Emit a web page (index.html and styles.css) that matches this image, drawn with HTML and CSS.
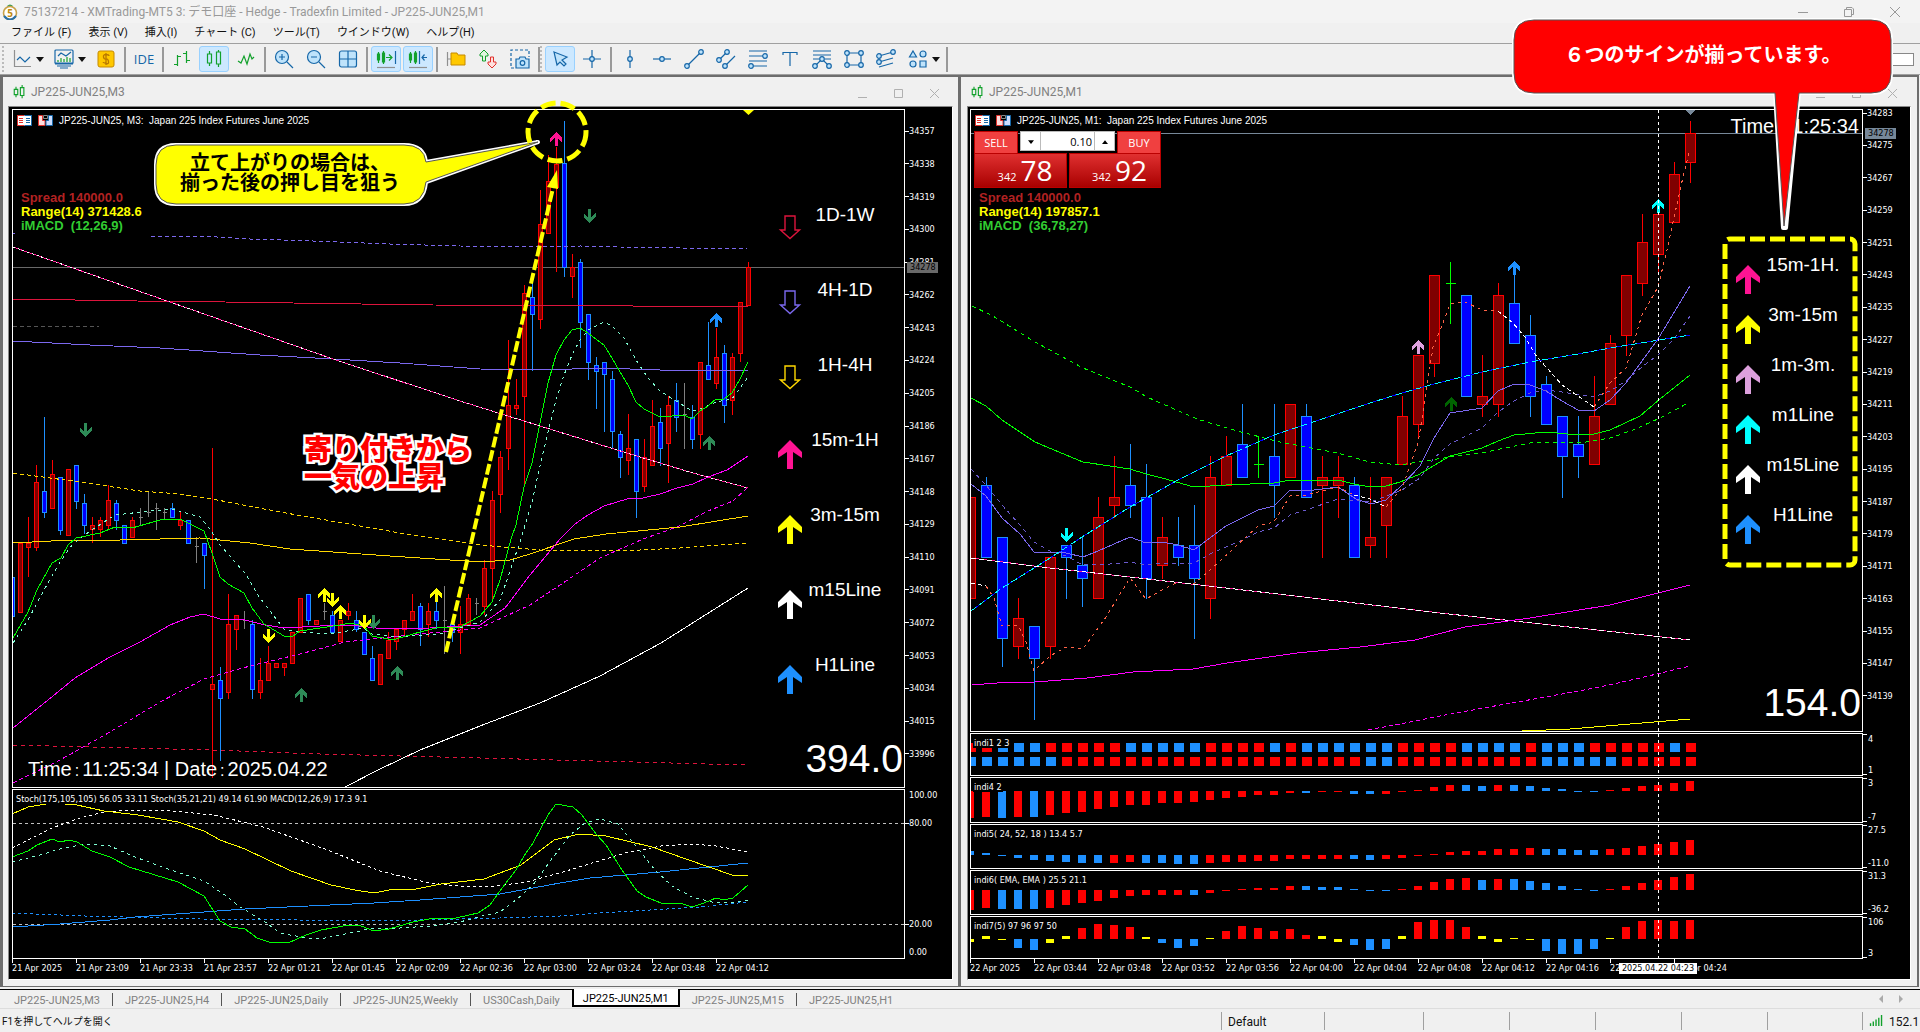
FILE: index.html
```
<!DOCTYPE html>
<html lang="ja">
<head>
<meta charset="utf-8">
<title>75137214 - XMTrading-MT5 3: デモ口座 - Hedge - Tradexfin Limited - JP225-JUN25,M1</title>
<link rel="stylesheet" href="styles.css">
</head>
<body>
<svg class="defs" width="0" height="0" aria-hidden="true">
  <symbol id="arrow" viewBox="0 0 24 29"><path d="M12 0 24 12V18L15 12V29H9V12L0 18V12Z" fill="currentColor"/></symbol>
  <symbol id="hollow" viewBox="0 0 22 25"><path d="M6 1H16V15H20.500L11 23.500 1.500 15H6Z" fill="none" stroke="currentColor" stroke-width="1.400"/></symbol>
  <symbol id="candles" viewBox="0 0 14 16"><path d="M3 2V5M3 11V14M10 0V3M10 12V15M1 5H5V11H1ZM8 3H12V12H8Z" fill="none" stroke="currentColor" stroke-width="1.300"/></symbol>
  <symbol id="caret" viewBox="0 0 8 5"><path d="M0 0H8L4 5Z" fill="currentColor"/></symbol>
  <symbol id="depth" viewBox="0 0 15 11"><path d="M0 0H15V11H0Z" fill="#fff"/><path d="M0 .5H7.500M.5 0V11M0 10.500H7.500M2 3.500H6M2 5.500H6M2 7.500H6" stroke="#e0322c"/><path d="M7.500 .5H15M14.500 0V11M7.500 10.500H15M9 3.500H13M9 5.500H13M9 7.500H13" stroke="#1667a8"/></symbol>
  <symbol id="oneclick" viewBox="0 0 15 11"><path d="M.5 .5H4.500V5.500H7V10.500H.5Z" fill="#fdd" stroke="#e0322c"/><path d="M14.500 .5H10.500V5.500H8V10.500H14.500Z" fill="#cdf" stroke="#1667a8"/><path d="M5.500 .5H9.500V3.500H5.500Z" fill="#000" stroke="#888"/></symbol>
</svg>
<div class="app">
  <header class="titlebar">
    <svg class="logo" viewBox="0 0 16 16"><path d="M5 2Q8-1 11 2L10 4H6Z" fill="#3a9a50"/><circle cx="8" cy="9" r="6.500" fill="#fff" stroke="#c9a24a" stroke-width="1.600"/><path d="M2 12Q8 19 14 12" fill="none" stroke="#2a70a8" stroke-width="2"/><text x="8" y="13" text-anchor="middle" class="logo-text">5</text></svg>
    <h1>75137214 - XMTrading-MT5 3: デモ口座 - Hedge - Tradexfin Limited - JP225-JUN25,M1</h1>
    <div class="win-buttons">
      <button aria-label="最小化"><svg viewBox="0 0 12 12"><path d="M1 6.500H11"/></svg></button>
      <button aria-label="元に戻す"><svg viewBox="0 0 12 12"><path d="M1.500 3.500H8.500V10.500H1.500ZM3.500 3V1.500H9L10.500 3V8.500H9"/></svg></button>
      <button aria-label="閉じる"><svg viewBox="0 0 12 12"><path d="M1 1 11 11M11 1 1 11"/></svg></button>
    </div>
  </header>
  <nav class="menubar">
    <button>ファイル (F)</button><button>表示 (V)</button><button>挿入(I)</button><button>チャート (C)</button><button>ツール(T)</button><button>ウインドウ(W)</button><button>ヘルプ(H)</button>
  </nav>
  <div class="toolbar">
    <span class="grip"></span>
    <button class="tool combo" aria-label="新規チャート"><svg viewBox="0 0 22 22"><path class="g" d="M3.500 2V19M3 18.500H20"/><path class="b" d="M6 12 9 9 14 14 19 9"/></svg><svg class="caret"><use href="#caret"/></svg></button>
    <button class="tool combo" aria-label="定型チャート"><svg viewBox="0 0 22 22"><path class="b" d="M3 2H19Q20 2 20 3V15H2V3Q2 2 3 2ZM2 16H20M4 18H18M7 20H15M5 8 8 5 13 8 18 4"/><path class="gr" d="M5 14V12M8 14V10M11 14V11M14 14V9M17 14V10"/></svg><svg class="caret"><use href="#caret"/></svg></button>
    <button class="tool" aria-label="気配値"><svg viewBox="0 0 22 22"><rect x="3" y="3" width="16" height="16" rx="2" fill="#ffc800" stroke="#c58a00"/><path d="M14 8Q14 6.500 11 6.500T8.500 9 11 11 13.500 13.500 11 15.500 8 14M11 5V17" fill="none" stroke="#b87800" stroke-width="1.300"/></svg></button>
    <span class="sep"></span>
    <button class="tool ide">IDE</button>
    <span class="sep"></span>
    <button class="tool" aria-label="バーチャート"><svg viewBox="0 0 22 22"><path class="gr" d="M6.500 7V18M3 16.500H6.500M6.500 8.500H10M15.500 3V15M12 5.500H15.500M15.500 12.500H19"/></svg></button>
    <button class="tool active" aria-label="ローソク足"><svg viewBox="0 0 22 22"><path class="gr" d="M6.500 3V6M6.500 15V18M15.500 2V4M15.500 16V19M4.500 6H8.500V15H4.500ZM13.500 4H17.500V16H13.500Z"/></svg></button>
    <button class="tool" aria-label="ラインチャート"><svg viewBox="0 0 22 22"><path class="gr" d="M3 13 6 15 9 8 12 16 15 6 17 11 19 9"/></svg></button>
    <span class="sep"></span>
    <button class="tool" aria-label="拡大"><svg viewBox="0 0 22 22"><circle class="f" cx="9" cy="9" r="6.500"/><path class="b" d="M14 14 20 20M9 6V12M6 9H12"/></svg></button>
    <button class="tool" aria-label="縮小"><svg viewBox="0 0 22 22"><circle class="f" cx="9" cy="9" r="6.500"/><path class="b" d="M14 14 20 20M6 9H12"/></svg></button>
    <button class="tool" aria-label="整列"><svg viewBox="0 0 22 22"><rect class="f" x="2.500" y="3" width="17" height="16" rx="2"/><path class="b" d="M11 3V19M2.500 11H19.500"/></svg></button>
    <span class="sep"></span>
    <button class="tool active" aria-label="自動スクロール"><svg viewBox="0 0 22 22"><path class="gr" d="M3.500 4V15M8.500 3V16M2.500 6H4.500V12H2.500ZM7.500 5H9.500V14H7.500ZM11 9.500H17M14 6.500 17 9.500 14 12.500"/><path class="b" d="M20.500 3V16"/><path class="g" d="M2 19.500H20"/></svg></button>
    <button class="tool active" aria-label="チャートシフト"><svg viewBox="0 0 22 22"><path class="gr" d="M3.500 4V15M8.500 3V16M2.500 6H4.500V12H2.500ZM7.500 5H9.500V14H7.500Z"/><path class="b" d="M12.500 3V16M20 9.500H15M17.500 6.500 15 9.500 17.500 12.500"/><path class="g" d="M2 19.500H20"/></svg></button>
    <span class="sep"></span>
    <button class="tool" aria-label="データフォルダ"><svg viewBox="0 0 22 22"><path class="g" d="M2.500 4V18M2 11H6"/><path d="M6 5H12L13 7H20V17H6Z" fill="#ffc800" stroke="#c58a00"/></svg></button>
    <button class="tool" aria-label="売買"><svg viewBox="0 0 22 22"><path d="M7 2 11 6V8H8.500V13H5.500V8H3V6Z" fill="#dff5df" stroke="#12a12c"/><path d="M15 20 11 16V14H13.500V9H16.500V14H19V16Z" fill="#ffe0de" stroke="#e0322c"/></svg></button>
    <button class="tool" aria-label="スクリーンショット"><svg viewBox="0 0 22 22"><path class="b" stroke-dasharray="3 2" d="M5 20H2V2H20V9"/><path class="f" d="M7 11H10L11 9H16L17 11H20V20H7Z"/><circle class="b" cx="13.500" cy="15" r="2.300"/></svg></button>
    <span class="sep"></span>
    <span class="grip second"></span>
    <button class="tool active" aria-label="カーソル"><svg viewBox="0 0 22 22"><path class="f" d="M5 4 18 9 13 12 17 16 15 18 11 14 8 17Z"/></svg></button>
    <button class="tool" aria-label="十字カーソル"><svg viewBox="0 0 22 22"><path class="b" d="M11 2V20M2 11H20"/><circle class="f" cx="11" cy="11" r="2.300"/></svg></button>
    <span class="sep"></span>
    <button class="tool" aria-label="垂直線"><svg viewBox="0 0 22 22"><path class="b" d="M11 2V20"/><circle class="f" cx="11" cy="11" r="2.300"/></svg></button>
    <button class="tool" aria-label="水平線"><svg viewBox="0 0 22 22"><path class="b" d="M2 11H20"/><circle class="f" cx="11" cy="11" r="2.300"/></svg></button>
    <button class="tool" aria-label="トレンドライン"><svg viewBox="0 0 22 22"><path class="b" d="M4 18 18 4"/><circle class="f" cx="4" cy="18" r="2.300"/><circle class="f" cx="18" cy="4" r="2.300"/></svg></button>
    <button class="tool" aria-label="平行チャネル"><svg viewBox="0 0 22 22"><path class="b" d="M4 12 12 4M10 18 20 8"/><circle class="f" cx="4" cy="12" r="2.300"/><circle class="f" cx="12" cy="4" r="2.300"/><circle class="f" cx="10" cy="18" r="2.300"/></svg></button>
    <button class="tool" aria-label="フィボナッチ"><svg viewBox="0 0 22 22"><path class="b" d="M2 3H20M2 8H16M2 13H20M6 18H20"/><circle class="f" cx="18" cy="8" r="2.300"/><circle class="f" cx="4" cy="18" r="2.300"/></svg></button>
    <button class="tool" aria-label="テキスト"><svg viewBox="0 0 22 22"><path class="b" d="M4 7V4.500H18V7M11 4.500V18"/></svg></button>
    <button class="tool" aria-label="ピッチフォーク"><svg viewBox="0 0 22 22"><path class="b" d="M2 3H20M2 7H20M2 11H8M14 11H20M4 18 11 11 18 18"/><circle class="f" cx="11" cy="11" r="2.300"/><circle class="f" cx="4" cy="18" r="2.300"/><circle class="f" cx="18" cy="18" r="2.300"/></svg></button>
    <button class="tool" aria-label="長方形"><svg viewBox="0 0 22 22"><path class="b" d="M4 5H18V17H4Z"/><circle class="f" cx="4" cy="5" r="2.300"/><circle class="f" cx="18" cy="5" r="2.300"/><circle class="f" cx="4" cy="17" r="2.300"/><circle class="f" cx="18" cy="17" r="2.300"/></svg></button>
    <button class="tool" aria-label="波動"><svg viewBox="0 0 22 22"><path class="b" d="M4 8 18 4M4 14 18 10M4 19 18 15"/><circle class="f" cx="4" cy="8" r="2.300"/><circle class="f" cx="18" cy="4" r="2.300"/><circle class="f" cx="4" cy="14" r="2.300"/></svg></button>
    <button class="tool combo" aria-label="図形"><svg viewBox="0 0 22 22"><path class="f" d="M6 3 9.500 9H2.500ZM13 13H19V19H13Z"/><circle class="f" cx="16" cy="6" r="3"/><circle class="f" cx="6" cy="16" r="3"/></svg><svg class="caret"><use href="#caret"/></svg></button>
    <span class="sep"></span>
    <input class="search" type="text" aria-label="検索">
  </div>

  <main class="mdi">
    <section class="window left">
      <header class="window-head"><svg class="window-icon"><use href="#candles"/></svg><h2>JP225-JUN25,M3</h2>
        <div class="window-buttons"><button aria-label="最小化"><svg viewBox="0 0 12 12"><path d="M1 10.500H10"/></svg></button><button aria-label="最大化"><svg viewBox="0 0 12 12"><path d="M1.500 2.500H9.500V10.500H1.500Z"/></svg></button><button aria-label="閉じる"><svg viewBox="0 0 12 12"><path d="M1 2 10 11M10 2 1 11"/></svg></button></div>
      </header>
      <div class="chart chart-m3">
        <div class="pane main">
          <svg class="plot" id="m3" viewBox="13 110 891 677" preserveAspectRatio="none"></svg>
          <div class="symbol"><svg><use href="#depth"/></svg><svg><use href="#oneclick"/></svg><span>JP225-JUN25, M3:&nbsp; Japan 225 Index Futures June 2025</span></div>
          <div class="info"><p class="spread">Spread 140000.0</p><p class="range">Range(14) 371428.6</p><p class="imacd">iMACD&nbsp; (12,26,9)</p></div>
          <ul class="legend">
            <li class="crimson"><svg><use href="#hollow"/></svg><span>1D-1W</span></li>
            <li class="slate"><svg><use href="#hollow"/></svg><span>4H-1D</span></li>
            <li class="gold"><svg><use href="#hollow"/></svg><span>1H-4H</span></li>
            <li class="pink"><svg><use href="#arrow"/></svg><span>15m-1H</span></li>
            <li class="yellow"><svg><use href="#arrow"/></svg><span>3m-15m</span></li>
            <li class="white"><svg><use href="#arrow"/></svg><span>m15Line</span></li>
            <li class="dodger"><svg><use href="#arrow"/></svg><span>H1Line</span></li>
          </ul>
          <p class="clock">Time<span class="colon">:</span>11:25:34 | Date<span class="colon">:</span>2025.04.22</p>
          <p class="big">394.0</p>
          <p class="note">寄り付きから<br>一気の上昇</p>
        </div>
        <ol class="scale prices" data-from="34357" data-step="19" data-count="20"></ol>
        <div class="pane">
          <svg class="plot" id="stoch" viewBox="13 790 891 168" preserveAspectRatio="none"></svg>
          <p class="pane-label">Stoch(175,105,105) 56.05 33.11 Stoch(35,21,21) 49.14 61.90 MACD(12,26,9) 17.3 9.1</p>
        </div>
        <ol class="scale levels"><li>100.00</li><li class="at80">80.00</li><li class="at20">20.00</li><li>0.00</li></ol>
        <ol class="times"><li>21 Apr 2025</li><li>21 Apr 23:09</li><li>21 Apr 23:33</li><li>21 Apr 23:57</li><li>22 Apr 01:21</li><li>22 Apr 01:45</li><li>22 Apr 02:09</li><li>22 Apr 02:36</li><li>22 Apr 03:00</li><li>22 Apr 03:24</li><li>22 Apr 03:48</li><li>22 Apr 04:12</li></ol>
        <span class="price-tag">34278</span>
        <svg class="speech" viewBox="150 96 444 114"><path class="halo" d="M176 145H404Q424 145 426 162L538 142 426 182Q424 204 404 204H176Q156 204 156 184V165Q156 145 176 145Z"/><path class="bubble" d="M176 145H404Q424 145 426 162L538 142 426 182Q424 204 404 204H176Q156 204 156 184V165Q156 145 176 145Z"/><circle cx="557" cy="132" r="29" fill="none" stroke="#ff0" stroke-width="5" stroke-dasharray="15 5"/></svg>
        <p class="speech-text">立て上がりの場合は、<br>揃った後の押し目を狙う</p>
      </div>
    </section>

    <section class="window right">
      <header class="window-head"><svg class="window-icon"><use href="#candles"/></svg><h2>JP225-JUN25,M1</h2>
        <div class="window-buttons"><button aria-label="最小化"><svg viewBox="0 0 12 12"><path d="M1 10.500H10"/></svg></button><button aria-label="最大化"><svg viewBox="0 0 12 12"><path d="M1.500 2.500H9.500V10.500H1.500Z"/></svg></button><button aria-label="閉じる"><svg viewBox="0 0 12 12"><path d="M1 2 10 11M10 2 1 11"/></svg></button></div>
      </header>
      <div class="chart chart-m1">
        <div class="pane main">
          <svg class="plot" id="m1" viewBox="971 110 891 621" preserveAspectRatio="none"></svg>
          <div class="symbol"><svg><use href="#depth"/></svg><svg><use href="#oneclick"/></svg><span>JP225-JUN25, M1:&nbsp; Japan 225 Index Futures June 2025</span></div>
          <form class="trade">
            <button type="button" class="side">SELL</button>
            <div class="lots"><button type="button" aria-label="減らす"><svg viewBox="0 0 8 5"><path d="M0 0H8L4 5Z"/></svg></button><input type="text" value="0.10" aria-label="ロット"><button type="button" aria-label="増やす"><svg viewBox="0 0 8 5"><path d="M0 5H8L4 0Z"/></svg></button></div>
            <button type="button" class="side">BUY</button>
            <div class="quotes"><button type="button"><small>342</small>78</button><button type="button"><small>342</small>92</button></div>
          </form>
          <div class="info"><p class="spread">Spread 140000.0</p><p class="range">Range(14) 197857.1</p><p class="imacd">iMACD&nbsp; (36,78,27)</p></div>
          <p class="clock">Time<span class="colon">:</span>11:25:34</p>
          <svg class="dashbox"><rect x="3" y="3" width="130" height="326" rx="5"/></svg>
          <ul class="legend">
            <li class="pink"><svg><use href="#arrow"/></svg><span>15m-1H.</span></li>
            <li class="yellow"><svg><use href="#arrow"/></svg><span>3m-15m</span></li>
            <li class="plum"><svg><use href="#arrow"/></svg><span>1m-3m.</span></li>
            <li class="aqua"><svg><use href="#arrow"/></svg><span>m1Line</span></li>
            <li class="white"><svg><use href="#arrow"/></svg><span>m15Line</span></li>
            <li class="dodger"><svg><use href="#arrow"/></svg><span>H1Line</span></li>
          </ul>
          <p class="big">154.0</p>
        </div>
        <ol class="scale prices" data-from="34283" data-step="8" data-count="19"></ol>
        <div class="pane"><svg class="plot" id="indi1" viewBox="971 734 891 41" preserveAspectRatio="none"></svg><p class="pane-label">indi1 2 3</p></div>
        <ol class="scale ends"><li>4</li><li>1</li></ol>
        <div class="pane"><svg class="plot" id="indi4" viewBox="971 778 891 44" preserveAspectRatio="none"></svg><p class="pane-label">indi4 2</p></div>
        <ol class="scale ends"><li>3</li><li>-7</li></ol>
        <div class="pane"><svg class="plot" id="indi5" viewBox="971 825 891 43" preserveAspectRatio="none"></svg><p class="pane-label">indi5( 24, 52, 18 ) 13.4 5.7</p></div>
        <ol class="scale ends"><li>27.5</li><li>-11.0</li></ol>
        <div class="pane"><svg class="plot" id="indi6" viewBox="971 871 891 43" preserveAspectRatio="none"></svg><p class="pane-label">indi6( EMA, EMA ) 25.5 21.1</p></div>
        <ol class="scale ends"><li>31.3</li><li>-36.2</li></ol>
        <div class="pane"><svg class="plot" id="indi7" viewBox="971 917 891 41" preserveAspectRatio="none"></svg><p class="pane-label">indi7(5) 97 96 97 50</p></div>
        <ol class="scale ends"><li>106</li><li>3</li></ol>
        <ol class="times"><li>22 Apr 2025</li><li>22 Apr 03:44</li><li>22 Apr 03:48</li><li>22 Apr 03:52</li><li>22 Apr 03:56</li><li>22 Apr 04:00</li><li>22 Apr 04:04</li><li>22 Apr 04:08</li><li>22 Apr 04:12</li><li>22 Apr 04:16</li><li>22 Apr 04:20</li><li>22 Apr 04:24</li></ol>
        <span class="time-tag">2025.04.22 04:23</span>
        <span class="price-tag">34278</span>
      </div>
    </section>
  </main>

  <nav class="tabs">
    <a href="#">JP225-JUN25,M3</a><a href="#">JP225-JUN25,H4</a><a href="#">JP225-JUN25,Daily</a><a href="#">JP225-JUN25,Weekly</a><a href="#">US30Cash,Daily</a><a href="#" class="current">JP225-JUN25,M1</a><a href="#">JP225-JUN25,M15</a><a href="#">JP225-JUN25,H1</a>
    <svg class="tab-scroll" viewBox="0 0 24 8"><path d="M4 0V8L0 4ZM20 0V8L24 4Z"/></svg>
  </nav>
  <footer class="status">
    <span class="hint">F1を押してヘルプを開く</span><span class="profile">Default</span><span class="cell"></span><span class="cell"></span><span class="cell"></span><span class="cell"></span><span class="cell"></span><span class="cell"></span>
    <span class="net"><svg viewBox="0 0 15 12"><path d="M1 12V9M4 12V7M7 12V5M10 12V3M13 12V0"/></svg>152.1</span>
  </footer>

  <div class="alert">
    <svg viewBox="1512 18 382 214"><path class="halo" d="M1534 20H1871Q1891 20 1891 40V73Q1891 93 1871 93H1799L1786 228H1783L1775 93H1534Q1514 93 1514 73V40Q1514 20 1534 20Z"/><path class="bubble" d="M1534 20H1871Q1891 20 1891 40V73Q1891 93 1871 93H1799L1784 226 1775 93H1534Q1514 93 1514 73V40Q1514 20 1534 20Z"/></svg>
    <p>６つのサインが揃っています。</p>
  </div>
</div>
<script src="charts.js"></script>
</body>
</html>
```
FILE: styles.css
```
*{box-sizing:border-box}
body{margin:0;background:#f0f0f0;font:12px/16px Roboto,"Noto Sans CJK JP",sans-serif;color:#111}
h1,h2,p,ul,ol{margin:0;padding:0;list-style:none}
h1,h2{font-size:12px;font-weight:400}
button{border:0;padding:0;background:none;font:inherit;color:inherit}
a{color:inherit;text-decoration:none}
.defs{position:absolute}
.app{position:relative;display:flex;flex-direction:column;height:100vh;min-height:700px;overflow:hidden}

.titlebar{display:flex;align-items:center;gap:6px;height:23px;padding-left:2px;background:#f3f3f3;color:#999}
.titlebar h1{flex:1}
.logo{width:16px;height:16px}
.logo-text{font:700 10px "Open Sans",sans-serif;fill:#c08a10}
.win-buttons{display:flex;gap:34px;padding-right:19px}
.win-buttons button,.window-buttons button{width:12px;height:12px}
.win-buttons svg,.window-buttons svg{display:block;width:12px;height:12px;fill:none;stroke:#999}
.menubar{display:flex;gap:17px;height:20px;padding-left:11px;font-size:11px;line-height:20px}
.menubar button{white-space:nowrap}

.toolbar{display:flex;align-items:center;gap:2px;height:32px;padding-left:2px;border-top:1px solid #a0a0a0;border-bottom:1px solid #a0a0a0}
.grip{width:3px;height:26px;border-left:2px dotted #bbb}
.grip.second{margin-left:-3px}
.tool{display:flex;align-items:center;justify-content:center;flex:none;width:30px;height:26px;border:1px solid transparent;border-radius:3px}
.tool svg{width:22px;height:22px}
.tool.combo{width:40px;gap:3px;justify-content:flex-start;padding-left:3px}
.tool .caret{width:8px;height:5px;color:#111}
.tool.active{background:#cce8ff;border-color:#99d1ff}
.tool.ide{color:#1667a8;font:13px "Open Sans",sans-serif}
.sep{width:2px;height:25px;margin:0 1px;background:#999}
.b,.f,.g,.gr{fill:none;stroke:#1667a8;stroke-width:1.200}
.f{fill:#bfe3fb}
.g{stroke:#909090}
.gr{stroke:#12a12c}
.search{width:170px;height:13px;margin:0 6px 0 auto;border:1px solid #888;background:#fff}

.mdi{flex:1;min-height:0;display:grid;grid-template-columns:1fr 1fr;margin-bottom:2px}
.window{display:flex;flex-direction:column;min-width:0;border:solid #6d6d6d;border-width:2px 2px 1px 3px;padding:0 5px 6px}
.window.right{border-left-width:1px;padding:0 6px 6px;margin-right:1px}
.window-head{display:flex;align-items:center;height:29px;padding-left:5px;gap:5px;color:#808080}
.window.right .window-head{padding-left:4px}
.window-head h2{flex:1;line-height:26px}
.window-icon{width:13px;height:14px;color:#12a12c}
.window-buttons{display:flex;gap:24px;padding:2px 12px 0 0}
.window-buttons svg{stroke:#b0b0b0}
.chart{position:relative;flex:1;min-height:0;display:grid;grid-template-columns:minmax(0,1fr) 47px;row-gap:1px;background:#000;border:1px solid #888;border-right-color:#fff;border-bottom-color:#fff;padding:2px 0 0 3px;color:#fff;font:9px/10px "DejaVu Sans Condensed","Noto Sans",sans-serif}
.chart-m3{grid-template-rows:minmax(0,1fr) 170px 19px}
.chart-m1{grid-template-rows:minmax(0,1fr) 43px 46px 45px 45px 43px 19px;padding-left:2px}
.pane{position:relative;border:1px solid #fff;min-height:0;overflow:hidden}
.plot{display:block;width:100%;height:100%;shape-rendering:crispEdges;fill:none}
.pane-label{position:absolute;left:2px;top:4px;padding:0 1px;background:#000}
.symbol{position:absolute;left:4px;top:5px;display:flex;align-items:center;gap:6px;font:10px/11px "Liberation Sans",sans-serif}
.symbol svg{width:15px;height:11px}
.info{position:absolute;left:8px;top:81px;font:700 13px/14px "Liberation Sans",sans-serif}
.spread{color:#b22222}.range{color:#ff0}.imacd{color:#32cd32}
.clock{position:absolute;left:15px;bottom:5px;font:20px/23px "Liberation Sans",sans-serif;white-space:nowrap}
.colon{padding:0 3px;font-size:16px}
.chart-m1 .clock{left:auto;bottom:auto;right:3px;top:5px}
.chart-m1 .colon{padding:0 2px}
.big{position:absolute;right:1px;bottom:5px;font:39px/46px "Liberation Sans",sans-serif}
.legend{position:absolute;right:17px;top:93px;font:19px/24px "Liberation Sans",sans-serif}
.legend li{display:flex;height:75px}
.legend svg{width:24px;height:29px;margin-top:12px}
.legend span{width:84px;margin-left:1px;text-align:center;color:#fff}
.chart-m1 .legend{right:17px;top:143px}
.chart-m1 .legend li{height:50px}
.crimson{color:#dc143c}.slate{color:#7b68ee}.gold{color:#ffd700}.pink{color:#ff1493}.yellow{color:#ff0}.white{color:#fff}.dodger{color:#1e90ff}.plum{color:#dda0dd}.aqua{color:#0ff}
.legend .crimson svg,.legend .slate svg,.legend .gold svg{height:25px}
.note{position:absolute;left:291px;top:325px;font:900 28px/27px "Noto Sans CJK JP",sans-serif;color:#f00;-webkit-text-stroke:5px #fff;paint-order:stroke fill}
.scale{display:flex;flex-direction:column;justify-content:space-between;line-height:8px}
.scale li{display:flex;align-items:center;height:8px}
.prices li::before,.levels .at80::before,.levels .at20::before{content:"";width:4px;height:1px;background:#fff}
.chart-m3 .prices{padding:18px 0 30px}
.chart-m1 .prices{padding:0 0 32px}
.levels{display:grid;grid-template-rows:28px 101px 28px 8px;padding:2px 0 3px;position:relative}
.levels li:first-child,.levels li:last-child{padding-left:4px}
.ends{padding:2px 0 2px 5px;position:relative}
.ends::before{content:"";position:absolute;left:0;top:1px;bottom:1px;width:4px;border:solid #fff;border-width:1px 0}
.times{grid-column:1/-1;display:flex;margin-top:-1px}
.times li{flex:none;width:64px;height:4px;padding:4px 0 0;border-left:1px solid #fff;white-space:nowrap;text-indent:-1px}
.time-tag{position:absolute;left:651px;bottom:5px;width:78px;background:#fff;color:#000;text-align:center;line-height:11px}
.price-tag{position:absolute;right:14px;top:155px;width:31px;padding-left:3px;background:#696969;color:#000;line-height:11px}
.chart-m1 .price-tag{top:21px;background:#789}
.speech{position:absolute;left:141px;top:-11px;width:444px;height:114px}
.halo{fill:#fff;stroke:#fff;stroke-width:4;stroke-linejoin:round}
.bubble{fill:#ff0;stroke:#555;stroke-width:1}
.speech-text{position:absolute;left:147px;top:45px;width:268px;text-align:center;font:700 20px/20px "Noto Sans CJK JP",sans-serif;color:#000}
.dashbox{position:absolute;right:4px;top:126px;width:136px;height:332px;fill:none;stroke:#ff0;stroke-width:5;stroke-dasharray:15 5}

.trade{position:absolute;left:3px;top:21px;display:grid;grid-template-columns:44px 95px 44px;justify-content:space-between;width:187px;font-family:"Open Sans",sans-serif}
.side{height:22px;background:#f04040;border:1px solid #b00;border-bottom:0;font-size:11px;line-height:18px;color:#fff}
.lots{display:flex;height:20px;background:#fff;border:1px solid #bbb}
.lots button{width:19px}
.lots svg{width:6px;height:4px;fill:#000}
.lots input{flex:1;min-width:0;border:solid #bbb;border-width:0 1px;padding:0 2px;text-align:right;font:11px "Open Sans",sans-serif;background:#fff}
.quotes{grid-column:1/-1;display:flex;gap:2px}
.quotes button{flex:1;height:35px;padding-right:13px;background:linear-gradient(#e03030,#a80000);border:1px solid #b00;text-align:right;font-size:28px;line-height:32px;color:#fff}
.quotes small{font-size:11px;margin-right:4px}

.tabs{display:flex;align-items:center;height:19px;border-top:1px solid #000;color:#808080;padding:0 17px 0 2px;font-size:11px}
.tabs a{height:13px;padding:0 12px;border-right:1px solid #555;line-height:15px;white-space:nowrap}
.tabs a:nth-child(5){border:0}
.tabs .current{align-self:stretch;height:18px;margin-top:-1px;border:solid #000;border-width:0 2px 2px;background:#fff;color:#000;line-height:20px;padding:0 9px}
.tabs a:nth-child(8){border:0}
.tab-scroll{width:24px;height:8px;margin-left:auto;fill:#aaa}
.status{display:flex;align-items:center;height:24px;border-top:1px solid #ddd;white-space:nowrap;overflow:hidden}
.status span{height:18px;border-left:1px solid #a0a0a0;line-height:20px}
.status .hint{flex:1;border:0;padding-left:2px;font-size:10px}
.status .profile{width:103px;padding-left:6px}
.status .cell{width:86px}
.status .cell:nth-child(3){width:99px}
.status .cell:nth-child(8){width:95px}
.status .net{width:58px;padding-left:6px}
.net svg{width:15px;height:11px;margin-right:5px;stroke:#12a12c;stroke-width:1.500}

.alert{position:absolute;right:26px;top:18px;width:382px;height:214px}
.alert svg{display:block;width:100%;height:100%}
.alert .bubble{fill:#f00}
.alert p{position:absolute;left:0;right:0;top:21px;text-align:center;color:#fff;font:700 20px/30px "Noto Sans CJK JP",sans-serif}
```
FILE: charts.js
```
const NS = 'http://www.w3.org/2000/svg';
const RED = ['#f00', '#800000'], BLUE = ['#1e90ff', '#00f'];

function add(svg, name, attrs) {
  const el = document.createElementNS(NS, name);
  for (const key in attrs) el.setAttribute(key, attrs[key]);
  svg.append(el);
  return el;
}
function line(svg, color, points, dash) {
  add(svg, 'polyline', { points, stroke: color, 'stroke-dasharray': dash || 'none' });
}
// rows: direction, high, open/close top, open/close bottom, low
function candles(svg, rows, x, step, width, doji) {
  for (const row of rows.trim().split(/\s+/)) {
    const [kind, spec] = [row[0], row.slice(1).split(',').map(Number)];
    if (kind === 'd') {
      const [high, mid, low] = spec;
      add(svg, 'path', { d: `M${x + .5} ${high}V${low}M${x - width / 2 + .5} ${mid + .5}h${width}`, stroke: doji });
    } else {
      const [edge, fill] = kind === 'r' ? RED : BLUE;
      const [high, top, bottom, low] = spec;
      add(svg, 'path', { d: `M${x + .5} ${high}V${low}`, stroke: edge });
      add(svg, 'rect', { x: x - width / 2 + .5, y: top + .5, width, height: Math.max(3, bottom - top), stroke: edge, fill });
    }
    x += step;
  }
}
function arrows(svg, list) {
  for (const [x, y, color, down] of list)
    add(svg, 'path', { d: 'M0-7 6-1V3L1.500-1V7H-1.500V-1L-6 3V-1Z', fill: color, transform: `translate(${x} ${y})${down ? ' scale(1 -1)' : ''}` });
}

const m3 = document.getElementById('m3');
line(m3, '#696969', '13,267.5 904,267.5');
candles(m3, `b577,577,616,616 r543,543,612,612 r517,543,547,577 r465,482,547,551 b417,491,512,518 r460,474,508,508 b477,477,530,535
r469,469,535,535 b465,465,501,509 b494,503,525,534 r517,525,529,543 r517,520,529,537 r485,500,525,530 b500,503,520,530 b525,525,543,543
r517,520,537,537 d508,517,526 d491,512,517 d503,508,530 d508,512,520 b503,508,517,517 r512,520,525,530 b520,520,543,543 d537,546,563
b543,543,555,589 r448,684,689,778 b667,680,698,761 r594,624,692,699 r615,615,629,650 d611,620,629 b620,624,689,699 r658,680,692,699
r646,663,680,680 r663,663,667,667 r663,663,667,676 r632,632,663,663 r598,598,632,632 b594,594,620,625 r620,620,624,624 d603,611,620
b611,615,632,632 r620,620,641,641 r603,611,615,620 b611,620,629,632 b632,632,654,654 b646,658,680,680 r654,654,684,684 r632,640,658,658
r629,629,641,650 r620,620,629,637 r594,611,620,620 b603,606,629,646 r603,611,624,637 b602,611,620,629 d586,620,654 b620,624,632,642
r606,624,632,654 r594,598,624,624 d598,603,615 r560,568,606,615 r491,500,568,600 r451,457,494,513 r340,405,448,470 r379,405,408,415
r285,293,396,487 b280,297,314,371 r190,224,319,329 r155,181,233,233 r147,164,187,272 b121,163,267,277 r254,267,276,298 b259,262,322,348
b314,314,362,380 b357,365,371,409 b362,362,374,432 b371,379,431,449 b431,434,457,478 r414,448,460,475 b439,439,491,518 r439,457,486,492
r400,426,465,465 b408,422,448,466 r396,405,443,483 b383,400,417,432 d383,414,449 b405,417,439,449 r362,362,434,449 b322,365,379,379
r328,357,383,389 b345,353,405,423 r353,357,400,415 r302,302,353,362 r262,267,305,305`, 12, 8, 4, '#808080');
line(m3, '#7b68ee', '13,233 15,233');
line(m3, '#7b68ee', '151,236 200,236 250,239 313,241 390,244 460,246 545,247 580,246 620,247 680,248 747,248', '4 3');
line(m3, '#dc143c', '13,299 137,301 225,302 361,304 433,305 633,306 748,306');
line(m3, '#555', '13,326 99,326', '4 3');
line(m3, '#7b68ee', '13,341 90,345 160,348 260,355 333,359 400,363 480,369 545,370 600,368 660,370 748,370');
line(m3, '#ffd700', '13,473 50,478 80,482 140,491 180,494 212,499 280,512 320,519 400,533 480,545 540,550 620,551 680,548 748,543', '4 3');
line(m3, '#ffd700', '13,543 70,540 120,540 200,538 250,543 290,549 390,556 480,562 510,560 530,554 574,539 606,534 680,527 748,516');
line(m3, '#f0f', '13,728 53,696 75,678 110,657 140,642 170,625 190,617 204,614 220,619 245,620 265,625 285,628 320,626 350,625 385,629 430,628 480,625 505,608 530,575 560,539 575,524 588,515 604,506 627,499 643,498 660,494 677,488 693,484 708,477 727,470 748,456');
line(m3, '#f0f', '13,783 60,760 110,732 160,702 204,679 250,666 300,654 345,642 400,636 480,628 530,605 560,585 600,558 643,539 677,527 708,511 733,501 747,488', '4 3');
line(m3, '#7fffd4', '13,643 28,620 44,590 60,562 72,545 90,531 115,515 150,511 172,509 200,517 212,532 220,545 236,563 245,573 260,598 284,629 300,632 330,634 364,628 372,634 396,637 440,634 480,622 500,600 521,539 532,502 540,466 548,432 556,400 564,375 572,355 580,340 588,330 604,322 612,326 624,338 636,360 648,378 660,391 676,401 692,411 700,409 716,402 732,399 740,388 748,377', '3 4');
line(m3, '#0f0', '13,638 28,612 37,590 52,563 61,558 68,545 76,538 100,533 115,527 132,528 160,520 180,519 204,531 212,553 220,577 228,584 244,593 252,608 264,624 284,636 293,636 300,631 340,625 350,623 364,626 372,636 388,639 396,639 420,632 440,627 460,627 480,616 492,602 500,580 511,539 516,525 524,487 532,463 540,423 548,383 556,355 564,340 572,330 580,328 588,333 597,340 604,345 612,358 620,372 628,385 636,402 644,409 652,413 660,417 684,415 692,419 700,411 708,406 716,399 724,399 732,393 740,379 748,362');
line(m3, '#dc143c', '13,745 130,748 212,750 320,754 480,758 747,765', '4 4');
line(m3, '#fff', '345,787 380,769 420,750 450,738 480,726 540,703 600,676 661,643 710,612 748,588');
for (const [color, dash] of [['#ff1493', ''], ['#fff', '2 3']])
  line(m3, color, '13,247 167,301 333,359 460,401 540,426 627,453 693,473 748,488', dash);
arrows(m3, [[85.5, 430, '#2e8b57', 1], [268.5, 636, '#ff0', 1], [301, 695, '#2e8b57'], [324, 595, '#ff0'], [332.5, 600, '#ff0', 1], [340, 612, '#ff0'], [373.5, 622, '#2e8b57', 1], [364.5, 622, '#ff0', 1], [397, 673, '#2e8b57'], [436, 595, '#ff0'], [556, 139, '#ff1493'], [589.5, 216, '#2e8b57', 1], [716, 320, '#1e90ff'], [709, 443, '#2e8b57']]);
add(m3, 'path', { d: 'M446 652 553 188', stroke: '#ff0', 'stroke-width': 4, 'stroke-dasharray': '11 3', 'shape-rendering': 'auto' });
add(m3, 'path', { d: 'M557 170 547 187 558 189ZM743 110H754L748.500 115Z', fill: '#ff0', 'shape-rendering': 'auto' });

const stoch = document.getElementById('stoch');
line(stoch, '#c0c0c0', '13,823.5 904,823.5', '3 3');
line(stoch, '#c0c0c0', '13,924.5 904,924.5', '3 3');
line(stoch, '#1e90ff', '12,927 60,924 110,920 135,917 245,909 330,905 374,903 420,900 500,894 560,883 590,878 660,872 748,863');
line(stoch, '#1e90ff', '12,913 85,916 200,919 300,920 420,920 500,918 560,916 600,913 650,910 700,907 748,902', '3 3');
line(stoch, '#fff', '12,848 52,828 80,818 104,812 129,810 171,811 214,815 263,827 325,849 380,871 429,883 459,886 496,886 527,882 563,872 625,853 661,846 692,844 716,846 748,852', '3 3');
line(stoch, '#ff0', '12,814 28,807 52,803 77,805 104,811 138,815 178,822 204,831 220,840 245,849 291,871 331,885 355,890 374,893 389,890 416,889 441,884 484,879 521,865 554,840 579,834 606,836 652,847 686,859 732,875 748,875');
line(stoch, '#7fffd4', '12,862 40,855 60,849 85,844 110,846 135,857 165,868 204,881 225,895 240,907 265,922 280,933 306,938 325,938 350,933 374,928 400,928 430,926 460,922 478,917 500,912 516,900 533,885 551,860 570,835 585,823 600,819 618,824 635,845 655,870 672,886 692,897 716,903 735,902 748,900', '3 4');
line(stoch, '#0f0', '12,857 28,851 37,845 52,839 60,842 69,840 77,842 92,851 110,857 129,867 178,882 204,896 220,921 231,927 245,929 257,938 269,942 288,943 306,935 321,930 349,925 361,926 374,931 389,929 413,922 435,918 456,918 478,913 490,905 502,888 516,870 524,856 533,843 548,815 556,804 573,807 582,815 597,835 606,845 622,870 637,891 646,897 661,903 683,904 692,907 704,903 716,898 724,900 733,898 748,885');

const m1 = document.getElementById('m1');
line(m1, '#778899', '971,133.5 1862,133.5');
candles(m1, `r497,497,598,598 b477,485,557,557 b537,537,638,667 r598,618,646,659 b626,626,658,720 r557,557,646,659 b545,545,557,599
b537,565,578,607 r497,517,598,598 r456,497,505,518 b444,485,505,518 b464,497,578,599 r517,537,565,579 b517,545,557,566 b505,545,578,639
r456,477,598,619 r436,456,485,485 b404,444,477,477 d436,464,478 b404,456,485,518 r404,404,477,477 b404,416,497,497 r456,477,485,558
r456,477,485,518 b477,485,557,557 r477,537,545,558 r477,477,525,558 r396,416,464,464 r355,355,424,437 r275,275,363,377 d262,283,324
b295,295,396,396 r355,396,404,417 r283,295,404,417 b275,303,343,343 b315,335,396,417 b376,384,424,424 b416,416,456,498 b416,444,456,478
r376,416,464,464 r335,343,404,404 r275,275,335,356 r214,242,283,296 r214,214,254,275 r162,174,222,222 r121,133,162,183`, 970, 16, 10, '#0f0');
line(m1, '#0f0', '972,306 993,316 1035,342 1083,368 1130,387 1147,397 1197,419 1237,431 1280,442 1337,453 1370,462 1400,465 1450,457 1482,453 1500,449 1530,443 1560,442 1580,443 1610,438 1633,430 1660,418 1688,403', '4 4');
line(m1, '#0f0', '971,398 986,406 1002,420 1035,442 1083,462 1130,469 1146,474 1162,478 1194,487 1226,485 1274,483 1290,480 1338,480 1354,484 1370,487 1386,486 1400,482 1418,475 1440,462 1450,456 1482,448 1498,441 1514,435 1546,432 1578,435 1594,434 1610,430 1640,416 1660,399 1690,375');
line(m1, '#7b68ee', '971,484 986,496 1002,518 1020,534 1034,552 1066,553 1083,557 1098,551 1114,544 1130,537 1146,543 1162,542 1178,545 1194,550 1210,538 1226,526 1258,510 1274,506 1290,490 1306,491 1338,487 1356,499 1371,504 1386,500 1402,485 1420,466 1434,438 1450,413 1482,408 1498,391 1514,384 1530,385 1546,391 1562,401 1578,410 1594,411 1610,400 1626,383 1658,339 1690,286');
line(m1, '#6a5acd', '971,469 986,485 1002,505 1020,525 1034,542 1050,551 1066,556 1083,565 1110,564 1130,562 1146,565 1162,563 1194,563 1210,554 1242,540 1258,532 1274,528 1290,515 1306,510 1338,499 1371,502 1402,490 1420,478 1434,458 1450,444 1482,428 1498,412 1514,401 1530,393 1546,390 1562,392 1594,397 1610,391 1626,381 1642,367 1658,355 1674,339 1690,316', '4 4');
line(m1, '#fff', '971,583 986,586', '4 3');
line(m1, '#ff6347', '986,586 994,598 1002,626 1018,625 1026,642 1034,671 1050,656 1066,647 1083,649 1106,617 1130,578 1146,599 1162,590 1178,582 1194,584 1210,570 1258,526 1274,522 1290,496 1306,495 1338,487 1354,495', '3 4');
line(m1, '#fff', '1354,495 1370,499 1386,507', '4 3');
line(m1, '#ff6347', '1386,507 1402,488 1418,443 1425,400 1433,347 1443,323 1450,304 1465,302 1482,310 1498,311', '3 4');
line(m1, '#fff', '1498,311 1513,323 1525,337 1537,357 1547,368 1562,385 1594,407', '4 3');
line(m1, '#ff6347', '1594,407 1610,383 1626,368 1642,315 1658,287 1667,250 1675,213 1683,177 1690,149', '3 4');
for (const [color, dash] of [['#00f', ''], ['#0ff', '6 4']])
  line(m1, color, '971,611 1002,588 1050,558 1082,537 1130,507 1178,480 1226,456 1274,435 1322,419 1370,403 1402,393 1434,384 1482,372 1530,362 1578,354 1610,348 1690,335', dash);
for (const [color, dash] of [['#ff1493', ''], ['#fff', '5 3']])
  line(m1, color, '971,558 1050,568 1130,577 1226,588 1338,601 1440,613 1560,626 1690,640', dash);
line(m1, '#f0f', '972,685 997,683 1035,682 1087,678 1133,672 1193,669 1227,663 1297,653 1360,647 1415,640 1465,627 1530,618 1610,605 1690,585');
line(m1, '#f0f', '1368,730 1410,722 1440,716 1500,705 1540,698 1600,687 1640,678 1690,666', '4 3');
line(m1, '#ff0', '1522,731 1570,729 1630,724 1690,719');
arrows(m1, [[1066.5, 535, '#0ff', 1], [1418, 347, '#dda0dd'], [1451, 404, '#006400'], [1514, 268, '#1e90ff'], [1658, 206, '#0ff']]);
add(m1, 'path', { d: 'M1685 110H1696L1690.500 115Z', fill: '#778899' });

// histogram cells: colour letter and signed height above the base line
const FILL = { r: '#f00', b: '#1e90ff', y: '#ff0' };
function bars(id, base, list) {
  const svg = document.getElementById(id);
  list.split(' ').forEach((cell, i) => {
    const h = +cell.slice(1);
    add(svg, 'rect', { x: 966 + 16 * i, y: h > 0 ? base - h : base, width: 8, height: Math.abs(h), fill: FILL[cell[0]] });
  });
}
const indi1 = document.getElementById('indi1');
[['rrbbbrrrrrbbbbbrrrrbrbbbbbbrrrrbbbbrbbbrrrrrbr', 743], ['bbbbbbrrrrrrrrrrrrrrrrrrrbbrrrrrrrrrbbbbbrrrrr', 757]].forEach(([row, y]) =>
  [...row].forEach((c, i) => add(indi1, 'rect', { x: 966 + 16 * i, y, width: 10, height: 9, fill: FILL[c] })));
bars('indi4', 791, 'r-27 r-26 b-27 r-26 b-26 r-24 r-22 r-21 r-18 r-16 r-14 r-14 r-12 r-12 r-11 r-9 r-7 r-6 r-4 r-4 r-2 b-2 r-1 r-1 b-3 b-3 r-3 r-1 r1 r4 r6 b6 b5 r6 b6 b5 b3 b2 b-1 b-1 r1 r3 r5 r6 r8 r10');
bars('indi5', 855, 'b4 b2 b-1 b-3 b-5 b-6 b-7 b-8 b-8 r-8 r-7 b-8 b-8 b-9 b-9 r-8 r-7 r-7 r-6 r-6 r-4 r-4 r-4 r-4 b-4 b-5 r-4 r-3 r-1 r1 r3 r4 r4 r6 r6 r7 b6 b6 b5 b5 r6 r7 r9 r11 r13 r15');
bars('indi6', 890, 'r-20 r-18 b-19 b-19 b-19 r-18 r-15 r-13 r-11 r-8 r-6 r-5 r-5 r-5 b-5 r-3 r-1 r1 r2 r2 r4 b4 b3 b3 b1 b-1 b-1 r1 r4 r8 r11 r12 b10 r11 b11 b9 b7 b4 b1 b-1 r1 r4 r7 r10 r13 r16');
bars('indi7', 939, 'y-3 y3 y-1 b-9 b-11 y-4 y3 r11 r15 r14 r12 y2 b-4 b-9 b-7 y1 r8 r13 r11 r8 r10 r4 y3 y-3 b-6 b-11 b-10 y3 r17 r19 r19 r12 y3 y-3 y1 y-1 b-12 b-15 b-15 b-10 y1 r12 r18 r19 r18 r19');
for (const id of ['m1', 'indi1', 'indi4', 'indi5', 'indi6', 'indi7'])
  add(document.getElementById(id), 'path', { d: 'M1658.500 110V958', stroke: '#fff', 'stroke-dasharray': '3 3' });

for (const list of document.querySelectorAll('.prices')) {
  const { from, step, count } = list.dataset;
  for (let i = 0; i < count; i++) {
    const item = document.createElement('li');
    item.textContent = from - step * i;
    list.append(item);
  }
}
```
